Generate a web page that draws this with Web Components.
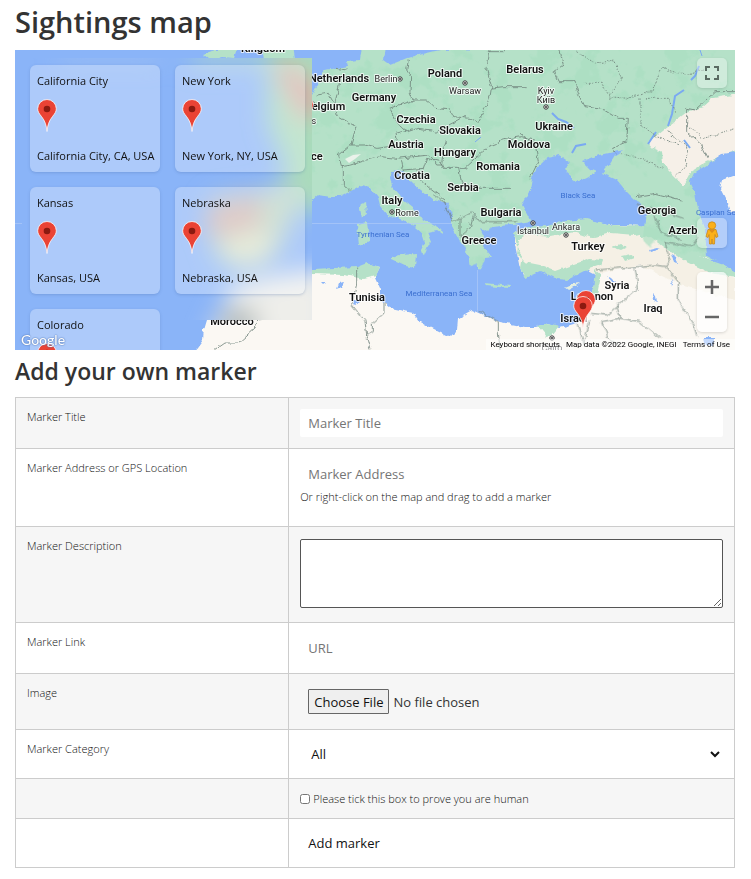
<!DOCTYPE html>
<html lang="en">
<head>
<meta charset="utf-8">
<title>Sightings map</title>
<style>
  body { margin: 0; background: #fff; color: #333; font-family: "Segoe UI", "Open Sans", "Noto Sans", sans-serif; }
</style>
</head>
<body>
<sightings-page></sightings-page>
<script>
const define = (name, html, setup) => customElements.define(name, class extends HTMLElement {
  constructor() {
    super();
    this.attachShadow({ mode: 'open' }).innerHTML = html;
    if (setup) setup(this);
  }
});

/* ---------- Pin ---------- */
const pin = `
  <path d="M10 32.500C9.400 26 8 22 4.500 17.500C2.300 14.700 .7 12.800 .7 9.800A9.300 9.300 0 0 1 19.300 9.800C19.300 12.800 17.700 14.700 15.500 17.500C12 22 10.600 26 10 32.500Z" fill="#ea4335" stroke="#fff" stroke-opacity=".75" stroke-width="1"/>
  <circle cx="10" cy="10" r="3.300" fill="#8b1a10"/>`;

define('map-pin', `
<style>:host { display: block; width: 20px; height: 33px } svg { display: block; width: 100%; height: 100% }</style>
<svg viewBox="0 0 20 33" aria-hidden="true">${pin}</svg>`);

/* ---------- Card in the marker list ---------- */
define('marker-card', `
<style>
  :host { display: flex; flex-direction: column; box-sizing: border-box; min-height: 107px; padding: 8px 7px;
    background: rgba(255,255,255,.3); border-radius: 6px; box-shadow: 0 1px 3px rgba(60,90,150,.25);
    font-size: 11px; line-height: 16px; color: #111; white-space: nowrap }
  map-pin { margin: 10px 0 16px }
</style>
<slot name="title"></slot><map-pin></map-pin><slot name="address"></slot>`);

/* ---------- Round-cornered map control ---------- */
define('map-control', `
<style>
  :host { display: block }
  button { display: grid; place-items: center; width: 30px; height: 30px; margin: 0; padding: 0; border: 0;
    border-radius: 5px; background: rgba(255,255,255,.35); color: #5f6368; box-shadow: 0 1px 3px rgba(0,0,0,.12) }
  :host([plain]) button { background: none; box-shadow: none }
</style>
<button type="button"><slot></slot></button>`, el => {
  el.shadowRoot.querySelector('button').setAttribute('aria-label', el.getAttribute('label') || '');
});

/* ---------- Map drawing ---------- */
const places = [
  ['Kingdom', 263, 52, 'c'], ['Netherlands', 339, 82, 'c'], ['Germany', 374, 101, 'c'], ['Belgium', 325, 110, 'c'],
  ['Poland', 445, 77, 'c'], ['Belarus', 525, 73, 'c'], ['Czechia', 416, 123, 'c'], ['Slovakia', 460, 134, 'c'],
  ['Ukraine', 554, 130, 'c'], ['Moldova', 529, 148, 'c'], ['Austria', 406, 148, 'c'], ['Hungary', 455, 156, 'c'],
  ['Romania', 498, 170, 'c'], ['Croatia', 412, 179, 'c'], ['Serbia', 463, 191, 'c'], ['France', 306, 160, 'c'],
  ['Italy', 392, 204, 'c'], ['Bulgaria', 501, 216, 'c'], ['Greece', 479, 244, 'c'], ['Georgia', 657, 214, 'c'],
  ['Azerb', 683, 234, 'c'], ['Turkey', 588, 250, 'c'], ['Syria', 617, 289, 'c'], ['Lebanon', 592, 300, 'c'],
  ['Israel', 574, 322, 'c'], ['Iraq', 653, 312, 'c'], ['Tunisia', 367, 301, 'c'], ['Morocco', 232, 325, 'c'],
  ['Berlin', 386, 82, 't'], ['Warsaw', 465, 94, 't'], ['Kyiv', 546, 94, 't'], ['Київ', 546, 103, 't'],
  ['Rome', 407, 216, 't'], ['İstanbul', 533, 234, 't'], ['Ankara', 566, 230, 't'], ['Paris', 306, 124, 't'], ['Cairo', 552, 351, 't'],
  ['Black Sea', 578, 198, 's'], ['Tyrrhenian Sea', 383, 237, 's'], ['Mediterranean Sea', 439, 296, 's'], ['Caspian Sea', 718, 215, 's']
].map(([t, x, y, k]) => `<text class="${k}" x="${x}" y="${y}">${t}</text>`).join('');

const towns = [[400, 79], [465, 83], [546, 107], [392, 212], [533, 223], [566, 235], [552, 338]]
  .map(([x, y]) => `<circle cx="${x}" cy="${y}" r="2.200"/><circle class="dot" cx="${x}" cy="${y}" r="1"/>`).join('');

const drawing = `
<svg class="map" viewBox="15 50 720 300" preserveAspectRatio="xMidYMid slice" role="img" aria-label="Map of Europe and the Mediterranean">
  <defs>
    <filter id="rough" x="0" y="0" width="100%" height="100%">
      <feTurbulence type="fractalNoise" baseFrequency=".14" numOctaves="3" seed="4"/>
      <feDisplacementMap in="SourceGraphic" scale="5" xChannelSelector="R" yChannelSelector="G"/>
    </filter>
    <filter id="mottle" x="0" y="0" width="100%" height="100%">
      <feTurbulence type="fractalNoise" baseFrequency=".045" numOctaves="4" seed="11"/>
      <feColorMatrix values="0 0 0 0 .4  0 0 0 0 .74  0 0 0 0 .54  0 9 0 0 -4.800"/>
      <feComposite in2="SourceGraphic" operator="in"/>
    </filter>
    <path id="europe" d="M306 99L312 95 318 84 325 70 338 68 348 66 347 61 360 60 362 45 385 45 383 60 390 65 407 58 427 53 440 50 745 45 745 260 640 260 645 220 647 208 635 200 627 192 617 180 602 173 610 163 615 155 623 150 600 155 583 162 590 169 597 172 587 178 580 181 573 182 571 175 565 170 570 162 560 155 547 158 537 168 532 178 530 190 522 205 531 222 513 225 500 226 492 227 487 232 480 228 484 236 482 245 492 257 485 258 484 262 480 270 477 264 470 267 467 250 458 238 452 227 452 212 447 203 433 200 415 185 407 177 402 170 392 172 390 177 392 186 400 195 403 200 412 207 417 215 425 220 433 225 442 230 443 234 437 230 428 232 430 237 432 242 428 246 424 255 420 252 425 242 422 233 415 227 403 220 388 215 380 205 378 197 370 187 362 185 350 192 340 197 330 197 318 195 311 201 304 219 290 227 282 240 284 247 276 256 262 262 250 264 240 278 228 271 208 268 207 249 213 225 212 206 213 196 235 194 268 197 275 176 268 155 246 137 248 131 266 132 271 117 285 121 296 108Z"/>
    <path id="east" d="M515 232L527 228 548 227 565 222 587 220 612 225 645 226 658 232 675 250 705 258 740 275 740 355 192 355 203 340 204 330 207 320 220 305 235 280 255 286 280 281 312 270 333 269 357 268 367 264 380 267 375 277 380 288 380 300 390 308 413 313 418 320 430 327 450 337 457 330 458 318 472 310 483 315 500 322 525 327 537 327 548 323 560 328 577 323 582 315 587 308 593 290 595 278 595 267 582 267 563 273 552 275 538 267 523 275 519 264 520 255 515 245Z"/>
    <path id="steppe" d="M740 94L713 98 703 107 687 112 667 127 648 142 653 148 662 152 663 162 667 168 677 178 683 187 691 172 707 162 740 149Z"/>
  </defs>
  <rect x="15" y="50" width="720" height="300" fill="#8ab4f8"/>
  <g filter="url(#rough)">
    <g fill="#b5e1c8">
      <use href="#europe"/>
      <path d="M203 54L215 50H237L234 58 222 57 210 60ZM262 45H293L299 85 297 99 270 107 250 107 262 90 255 84 266 76Z"/>
      <path d="M361 204l5-2 1 13-5 3-2-9zM357 224l10-2 2 20-10 3zM392 257l8-2 16-1-1 14-8-2-15-7zM486 283l24 3-1 2-22-2z"/>
    </g>
    <use href="#east" fill="#fbf8f3"/>
    <path d="M515 232L527 228 548 227 565 222 587 220 612 225 645 226 658 232 675 250 690 258 735 278 735 300 680 285 640 265 595 274 582 267 563 273 552 275 538 267 523 275 519 264 515 245Z" fill="#f5f0e5"/>
    <g fill="#b5e1c8">
      <path d="M514 232l14-5 20-1 17-5 22-2 25 6 33 1 8 5-18 4-24-2-20 5-17-6-23 4-23-2-9 6-2 14 8 8 15 3 15 6 14-5 20-7 14 1-2 5-12 4-10 5-12 6-10-1-16-8-16 7-5-10 2-12-5-10z"/>
      <path d="M312 269l45-2 10-4 13 4-4 9-12 3-20-4-32-1-30 4-1-2zM595 270l6 5-4 20-8 15-4 1 8-22zM538 326l10-3 11 3-8 10-4 1zM640 225l20 4 22 20 24 10 30 10v8l-25-4-30-14-30-22-11 1zM612 247l8-3 7 3-6 3zM622 256l10-2 2 4-9 3z"/>
    </g>
    <path d="M565 287l7-3 8-1-7 5-4 2z" fill="#e4efe0"/>
    <g fill="#8ab4f8"><path d="M338 284l6-1-2 4-6 2zM320 282l5 0-3 2zM352 300l8 2-5 4zM649 250l8-2 3 1-10 3zM671 254l5 3 2 7-4-1zM653 293l3 3 1 6-3-2zM607 276l4 2 5 5-3 0zM704 337l10 0 0 9-8 0zM671 278l2 6-1 3z"/></g>
  </g>
  <g filter="url(#mottle)" opacity=".7"><use href="#europe"/></g>
  <g filter="url(#rough)">
    <use href="#steppe" fill="#f6f0e8"/>
    <path d="M737 152L722 154 710 163 694 173 690 182 695 192 696 200 700 215 705 228 706 245 707 256 740 274V152Z" fill="#8ab4f8"/>
    <path d="M740 173L722 180 720 188 726 200 730 212 740 213Z" fill="#faf7f2"/>
  </g>
  <path d="M345 159l8-4 8-1-6 5-6 4z" fill="#eaf2ea"/>
  <g fill="none" stroke="#7aa9f2" stroke-width="1">
    <path d="M552 113l6 6 8 3 8 6M572 153l4-7 10-2M648 144l8-12M668 126l4-12 3-18 9-6M699 66l-4 10-4 4M684 140l6 8" stroke-width="2"/>
    <path d="M475 142l6-5M700 50l2 6"/>
  </g>
  <g fill="none" stroke="#6d8078" stroke-width=".8" filter="url(#rough)">
    <g transform="translate(300 45) scale(.333333)" stroke-width="2.400">
      <path d="M325 45l-5 30 12 20-2 45 10 25 40 0 25 25 45 5 10 20 50 5 25 15 35-80 5-30-15-50 10-60-10-35M268 190l72-25M268 190l25 45 30 25 30-10 40 5 15 10 25-20 40-20 25-15M110 70l30 5M118 120l-15 60 5 30 60 35-15 55M50 150l35-5 25 45M150 300l45 0 35 10 35-5 25-10-5-30 35-10M150 300l-35 30 10 35 30-5 45-15 40-10 50 5 50-5 50-5 20 30 15 0 5-45 10-30M130 365l0 55 20 20M305 345l5 30 60-5 10-30 40 10 10 20 65 0 70-65 25-10 15-10 60-10 40 10M475 365l10 50 55 15 90 0M370 370l-15 30 40 35 40 30M570 130l40-5 70 0M560 20l55 0"/>
    </g>
    <g transform="translate(520 45) scale(.333333)" stroke-width="2.400">
      <path d="M120 15l10 45-30 20 15 30 50 0 10 35 20 40 60 10 40 25 30 0-5 70-45 20 10 15M0 265l45 30 10 55-25 50M645 140l-60 0-60 55-25-5 0 70 45 40 20 40M345 455l60-10 80 20"/>
      <path stroke-dasharray="5 4" d="M165 15l60 40 60-10 20 60-40 50 60 5 70-20 30-70 70 20 60-20M195 115l50 0 30 50M360 160l0 80 60 40 60 20M300 325l60 15 70 30M375 160l70 0 25 50M500 240l50 40 90-25M440 260l60 40 0 60-30 30"/>
    </g>
    <g transform="translate(300 195) scale(.333333)" stroke-width="2.400">
      <path d="M170 218l0 50-15 60 40 50 5 45 10 40M252 325l0 30-35 30 0 25-20 15M530 345l65 35 0 30 5 55M430 20l30 60 55-30 25 30 110 0M400 0l35 25M480 70l0 55 30-25 10-40"/>
    </g>
    <g transform="translate(520 195) scale(.333333)" stroke-width="2.400">
      <path d="M230 225l55-5 70-5 50-5 35 5 10-15-15-60 50 10 30 5 20-30M345 220l10 60-30 25-65 55-50-5M290 330l10 40-55 10 20 50 30 20M300 370l60 10 60 50M440 215l35 50 0 50 45 70 10 40M175 385l15 65 20-75M405 60l15 50 65 25M350 30l80 20 60 20"/>
    </g>
    <path d="M214 350l10-7 14 0 17-15 3-8 20-2M310 100l15 12"/>
  </g>
  <path d="M15 223.500H452M477.500 270V312" stroke="#b4cef9" stroke-width="1" opacity=".6"/>
  <g class="towns">${towns}</g>
  <g class="labels">${places}</g>
  <g transform="translate(576 290)">${pin}</g>
  <g transform="translate(573 296)">${pin}</g>
  <g transform="translate(294 95)">${pin}</g>
</svg>`;

/* Frosted backdrop of the marker list: the coastline reduced to soft patches of colour. */
const frost = `
<svg class="frost" viewBox="22 58 290 262" preserveAspectRatio="none" aria-hidden="true">
  <defs><filter id="soft" filterUnits="userSpaceOnUse" x="-40" y="0" width="420" height="380"><feGaussianBlur stdDeviation="12"/></filter></defs>
  <rect x="22" y="58" width="290" height="262" fill="#8ab4f8"/>
  <g filter="url(#soft)">
    <path d="M60 52h100v8H60z" fill="#a4c2ee"/>
    <path d="M192 46h85l-5 20h-80z" fill="#a6cdd8"/>
    <path d="M268 40h70v170h-30l-18-10-8-45-14-30z" fill="#a9dbbb"/>
    <path d="M286 60l20 18 10 12v26l-14 4-14-30-12-18z" fill="#df9ea0"/>
    <path d="M212 198l50-6 32-12 8 18-18 40-12 22-25 10-28-8-10-30z" fill="#bcd6c4"/>
    <path d="M207 208l40-12 18 8-8 26-38 8-14-8z" fill="#d2b4b0"/>
    <path d="M222 242l44-12 8 20-24 14-22-4z" fill="#dfe6cc"/>
    <path d="M233 286l40-10 60-8v80H205l14-34z" fill="#eeeeea"/>
    <path d="M222 312h34v20h-34z" fill="#93a0a4"/>
  </g>
</svg>`;

define('sightings-map', `
<style>
  :host { display: block; position: relative; height: 300px; overflow: hidden; background: #8ab4f8; font-family: Roboto, sans-serif }
  .map { display: block; width: 100%; height: 100% }
  .labels text { text-anchor: middle; paint-order: stroke; stroke: #fff; stroke-opacity: .75; stroke-width: 2px; stroke-linejoin: round }
  .c { font-size: 11px; font-weight: 600; fill: #111 }
  .t { font-size: 9px; fill: #222 }
  .labels .s { font-size: 8px; fill: #3b6fd0; stroke: none }
  .towns { fill: #fff; stroke: #333; stroke-width: 1px } .dot { fill: #333; stroke: none }
  .panel { position: absolute; left: 7px; top: 8px; width: 290px; height: 262px; box-sizing: border-box; padding: 7px 7px 0 8px;
    font-family: "Segoe UI", "Open Sans", sans-serif }
  .frost { position: absolute; inset: 0; width: 100%; height: 100% }
  .list { position: relative; display: grid; grid-template-columns: 130px 130px; gap: 15px }
  .controls { position: absolute; top: 8px; right: 8px; bottom: 18px; display: flex; flex-direction: column; gap: 24px }
  .controls .first { margin-bottom: auto }
  .controls svg { display: block }
  .zoom { display: flex; flex-direction: column; border-radius: 5px; background: rgba(255,255,255,.7); box-shadow: 0 1px 3px rgba(0,0,0,.15) }
  .logo { position: absolute; left: 6px; bottom: 1px; font: 500 14px/18px Lato, sans-serif; color: #fff; text-decoration: none;
    text-shadow: 0 0 1px #4a6fae, 0 0 2px #5c7fb8 }
  .credits { position: absolute; right: 0; bottom: 0; display: flex; gap: 6px; padding: 0 5px 0 4px; background: rgba(255,255,255,.5);
    font-size: 8px; line-height: 11px; color: #000; white-space: nowrap }
  .credits a, .credits button { font: inherit; color: inherit; background: none; border: 0; padding: 0; text-decoration: none }
</style>
${drawing}
<div class="panel">${frost}<div class="list"><slot></slot></div></div>
<a class="logo" href="#google">Google</a>
<div class="controls">
  <map-control class="first" label="Toggle fullscreen view">
    <svg width="14" height="14" viewBox="0 0 14 14" fill="none" stroke="#5a6b62" stroke-width="2"><path d="M1 5V1h4M9 1h4v4M13 9v4H9M5 13H1V9"/></svg>
  </map-control>
  <map-control label="Drag Pegman onto the map">
    <svg width="14" height="24" viewBox="0 0 14 24" fill="#fbb01b" stroke="#c98a1c" stroke-width=".8"><path d="M3 8.500h8l2 7-2 1-1-3-.5 9.500H7.500L7 18l-.5 5H4.500L4 13.500l-1 3-2-1z"/><circle cx="7" cy="4.500" r="3.700"/><path d="M4.500 8.800L7 11.500 9.500 8.800" fill="#e58a1f"/></svg>
  </map-control>
  <div class="zoom">
    <map-control plain label="Zoom in"><svg width="14" height="14" viewBox="0 0 14 14" fill="none" stroke="#666" stroke-width="2.500"><path d="M0 7h14M7 0v14"/></svg></map-control>
    <map-control plain label="Zoom out"><svg width="14" height="14" viewBox="0 0 14 14" fill="none" stroke="#666" stroke-width="2.500"><path d="M0 7h14"/></svg></map-control>
  </div>
</div>
<div class="credits"><button type="button">Keyboard shortcuts</button><span>Map data ©2022 Google, INEGI</span><a href="#terms">Terms of Use</a></div>`);

/* ---------- Form ---------- */
define('marker-form', `
<style>
  :host { display: block }
  table { width: 100%; table-layout: fixed; border-collapse: collapse; font-size: 11px; line-height: 17px; font-weight: 300; color: #111 }
  .label { width: 38% }
  th, td { padding: 11px; border: 1px solid #ccc; text-align: left; vertical-align: top; font-weight: inherit; box-sizing: border-box }
  th { padding-top: 10px; padding-bottom: 10px }
  tr:nth-child(odd) { background: #f6f6f6 }
  input, select, textarea, button { font-family: inherit; font-size: 13px; color: #111; margin: 0; box-sizing: border-box }
  input[type=text], input[type=url] { display: block; width: 100%; height: 28px; padding: 0 8px; border: 0; border-radius: 2px; background: #fff }
  ::placeholder { color: #757575 }
  .address { padding-bottom: 21px }
  .roomy { padding-top: 12px; padding-bottom: 14px }
  textarea { display: block; width: 100%; height: 69px; border: 1px solid #555; border-radius: 2px; background: #fff }
  input[type=file] { display: block; width: 100%; height: 33px; padding: 4px 8px; color: #333 }
  ::file-selector-button { height: 25px; margin: 0 4px 0 0; padding: 0 5px; border: 1px solid #666; border-radius: 1px; background: #efefef; color: #111; font: inherit }
  select { display: block; width: 100%; height: 26px; padding: 0 7px; border: 0; background: #fff }
  .check { display: flex; align-items: center; gap: 3px }
  input[type=checkbox] { width: 10px; height: 10px }
  button { height: 26px; padding: 0 8px; border: 0; background: none }
</style>
<form><table>
  <colgroup><col class="label"><col></colgroup>
  <tbody>
  <tr><th scope="row"><label for="title">Marker Title</label></th><td><input id="title" type="text" placeholder="Marker Title"></td></tr>
  <tr><th scope="row"><label for="address">Marker Address or GPS Location</label></th><td class="address"><input id="address" type="text" placeholder="Marker Address">Or right-click on the map and drag to add a marker</td></tr>
  <tr><th scope="row"><label for="description">Marker Description</label></th><td class="roomy"><textarea id="description"></textarea></td></tr>
  <tr><th scope="row"><label for="link">Marker Link</label></th><td><input id="link" type="url" placeholder="URL"></td></tr>
  <tr><th scope="row"><label for="image">Image</label></th><td><input id="image" type="file"></td></tr>
  <tr><th scope="row"><label for="category">Marker Category</label></th><td><select id="category"><option>All</option></select></td></tr>
  <tr><th></th><td><label class="check"><input type="checkbox">Please tick this box to prove you are human</label></td></tr>
  <tr><th></th><td><button type="button">Add marker</button></td></tr>
  </tbody>
</table></form>`);

/* ---------- Page ---------- */
define('sightings-page', `
<style>
  :host { display: block; padding: 0 16px 11px 15px }
  h1, h2 { margin: 0; font-weight: 600; color: #333; line-height: 43px }
  h1 { font-size: 29px; padding-bottom: 7px }
  h2 { font-size: 23px; padding-bottom: 4px }
</style>
<h1>Sightings map</h1>
<sightings-map>
  <marker-card><span slot="title">California City</span><span slot="address">California City, CA, USA</span></marker-card>
  <marker-card><span slot="title">New York</span><span slot="address">New York, NY, USA</span></marker-card>
  <marker-card><span slot="title">Kansas</span><span slot="address">Kansas, USA</span></marker-card>
  <marker-card><span slot="title">Nebraska</span><span slot="address">Nebraska, USA</span></marker-card>
  <marker-card><span slot="title">Colorado</span><span slot="address">Colorado, USA</span></marker-card>
</sightings-map>
<h2>Add your own marker</h2>
<marker-form></marker-form>`);
</script>
</body>
</html>
